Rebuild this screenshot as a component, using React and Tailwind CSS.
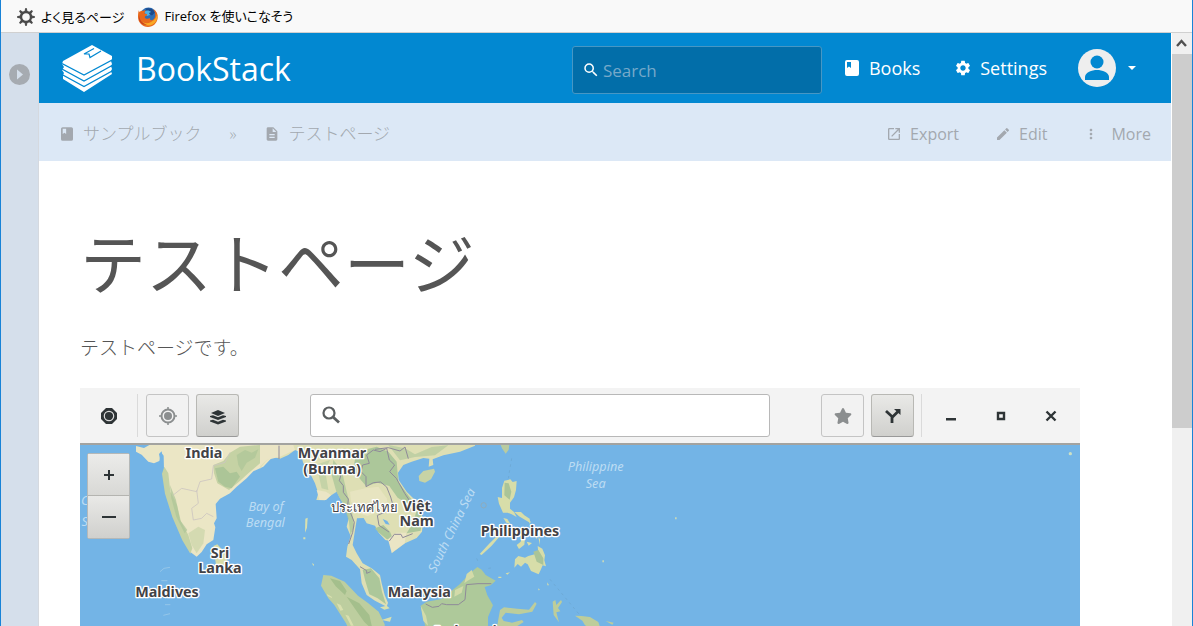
import { FaStar } from "react-icons/fa";
import {
  MdDescription,
  MdEdit,
  MdMoreVert,
  MdOpenInNew,
  MdSearch,
  MdSettings,
} from "react-icons/md";

function BookIcon({ className }) {
  return (
    <svg viewBox="0 0 14 16" className={className} fill="currentColor">
      <path
        fillRule="evenodd"
        d="M2 0h10a2 2 0 0 1 2 2v12a2 2 0 0 1-2 2H2a2 2 0 0 1-2-2V2a2 2 0 0 1 2-2zm0 2v6l2-1.500L6 8V2z"
      />
    </svg>
  );
}

function GearIcon() {
  return (
    <svg viewBox="0 0 18 18" className="size-[18px]" stroke="#4a4a4a" fill="none">
      <circle cx="9" cy="9" r="5" strokeWidth="2.400" />
      {[0, 45, 90, 135, 180, 225, 270, 315].map((angle) => (
        <path
          key={angle}
          d="M8 3.500L8.600 0.500H9.400L10 3.500z"
          fill="#4a4a4a"
          transform={`rotate(${angle} 9 9)`}
        />
      ))}
    </svg>
  );
}

function FirefoxIcon() {
  return (
    <svg viewBox="0 0 20 20" className="size-5">
      <circle cx="10.500" cy="9" r="8.500" fill="#2f6fb5" />
      <path d="M8 1.500c4-1 8 1 9 4l-3 3-4-2-3 1z" fill="#1b4a8c" />
      <path d="M6 5c2-2 5-2 7 0l-2 1 1 2-3 1z" fill="#4db2e6" />
      <path
        d="M1 3c0 1 .2 1.600.8 2C2.500 3.800 4 3.500 5 4c1-.8 2-.8 2.500-.6L6.300 6.500l3 .8c-.2 1.500-2 1.700-2.600 2.600.4 2 3 2.600 5.300 1.200-1 3.600 5 2.500 5.200-2C17.500 6 16.600 3.700 15 2c3.500 1.800 5 5 4.700 9-.5 5-4.700 9-9.700 9C4.500 20 0 15.500 0 10c0-3 .2-5 1-7z"
        fill="#e8691c"
      />
      <path
        d="M19 6c1.500 6-1.500 12-8 12.500-4 .2-7-2-8.500-5 3 3 7 3.500 10.500 1.500C17 13 19 10 19 6z"
        fill="#f9a825"
      />
      <path d="M1 8c.5 5 3 8.500 8 9.500C3.500 19 0 14 1 8z" fill="#c8401d" />
    </svg>
  );
}

function BookStackLogo() {
  return (
    <svg viewBox="0 0 50 47" className="h-[47px] w-[50px]">
      <path
        d="M1 16L30 0l20 11v3l-1 2 1 3-1 2 1 3-1 2 1 3L22 47 1 34l0-4 1-2-2-3 2-3-2-3z"
        fill="#fff"
      />
      <g fill="none" stroke="#0288d1" strokeWidth="1.200">
        <path d="M0 18.500L22 30 50 15" />
        <path d="M0 24L22 36 50 20.500" />
        <path d="M0 29.500L22 41.500 50 26" />
        <path d="M32 3.500L22 9h5l1 3.500L39 6" />
      </g>
    </svg>
  );
}

function BookmarkBar() {
  return (
    <nav className="flex h-[33px] shrink-0 items-center gap-3.5 border-b border-[#d0d0d0] bg-[#f9f9f9] pt-0.5 pl-4 font-['Noto_Sans_CJK_JP',sans-serif] text-[13px] text-black [font-feature-settings:'palt']">
      <a href="#frequent" className="flex items-center gap-1.5">
        <GearIcon />
        よく見るページ
      </a>
      <a href="#firefox" className="flex items-center gap-1.5">
        <FirefoxIcon />
        <span className="font-['Open_Sans','Noto_Sans_CJK_JP',sans-serif]">
          Firefox を使いこなそう
        </span>
      </a>
    </nav>
  );
}

function Header() {
  return (
    <header className="flex h-[70px] items-center bg-[#0288d1] pr-[35px] pl-[23px] text-white">
      <a href="#home" className="flex items-center gap-6">
        <BookStackLogo />
        <span className="pt-0.5 text-[32px]">BookStack</span>
      </a>
      <form className="relative mt-1 mr-[23px] ml-auto">
        <label htmlFor="search" className="sr-only">
          Search
        </label>
        <MdSearch className="absolute top-[15px] left-[10px] size-[18px]" />
        <input
          id="search"
          type="text"
          placeholder="Search"
          className="h-12 w-[250px] rounded-[3px] border border-[#4797c4] bg-[#026ea9] pl-[30px] text-[17px] placeholder:text-[#76a9c9] outline-none"
        />
      </form>
      <nav className="flex items-center text-lg">
        <a href="#books" className="mr-[34px] flex items-center gap-2.5">
          <BookIcon className="h-4 w-3.5" />
          Books
        </a>
        <a href="#settings" className="mr-[31px] flex items-center gap-2">
          <MdSettings className="size-[18px]" />
          Settings
        </a>
        <button type="button" aria-label="Account" className="flex items-center gap-3">
          <svg viewBox="0 0 38 38" className="size-[38px]">
            <circle cx="19" cy="19" r="19" fill="#eee" />
            <circle cx="19" cy="13" r="6.500" fill="#0288d1" />
            <path d="M7 31v-3c0-4.500 7-7 12-7s12 2.500 12 7v3z" fill="#0288d1" />
          </svg>
          <svg viewBox="0 0 8 4" className="h-1 w-2" fill="#fff">
            <path d="M0 0h8L4 4z" />
          </svg>
        </button>
      </nav>
    </header>
  );
}

function Breadcrumbs() {
  return (
    <div className="flex h-[58px] items-center justify-between bg-[#dce8f6] pt-[3px] pr-5 pl-[22px] text-[#a3a8af]">
      <nav className="flex items-center text-[17px] font-light">
        <a href="#book" className="flex items-center gap-2.5">
          <BookIcon className="h-3.5 w-3" />
          サンプルブック
        </a>
        <span className="mx-7 text-base">»</span>
        <a href="#page" className="flex items-center gap-2">
          <MdDescription className="size-4" />
          テストページ
        </a>
      </nav>
      <div className="flex items-center gap-9 text-base">
        <button type="button" className="flex items-center gap-2">
          <MdOpenInNew className="size-4" />
          Export
        </button>
        <a href="#edit" className="flex items-center gap-2">
          <MdEdit className="size-4" />
          Edit
        </a>
        <button type="button" className="flex items-center gap-3">
          <MdMoreVert className="size-4" />
          More
        </button>
      </div>
    </div>
  );
}

function ToolButton({ label, raised, children }) {
  return (
    <button
      type="button"
      aria-label={label}
      className={`flex h-[43px] w-[43px] shrink-0 items-center justify-center rounded-[3px] border ${
        raised
          ? "border-[#b8b8b4] border-b-[#999] bg-linear-to-b from-[#e9e9e7] to-[#d0d0cd] text-[#2e3436]"
          : "border-[#c4c4c4] bg-[#f2f2f2] text-[#8b8e8f]"
      }`}
    >
      {children}
    </button>
  );
}

function MapToolbar() {
  return (
    <div className="flex h-[57px] items-center border-b-2 border-[#a3a3a0] bg-[#f3f3f3] pr-[23px] pl-[21px] text-[#2e3436]">
      <svg viewBox="0 0 16 16" className="mr-5 size-4 shrink-0">
        <path d="M5 0h6l5 5v6l-5 5H5l-5-5V5z" fill="currentColor" />
        <circle cx="8" cy="8" r="4.700" fill="currentColor" stroke="#ddd" strokeWidth="1.200" />
      </svg>
      <div className="mr-2 h-[43px] w-px shrink-0 bg-[#dadada]" />
      <ToolButton label="Current location">
        <svg viewBox="0 0 18 18" className="size-[18px]" fill="none" stroke="currentColor">
          <circle cx="9" cy="9" r="6.500" strokeWidth="2" />
          <circle cx="9" cy="9" r="4" fill="currentColor" stroke="none" />
          <path d="M9 0v3M9 15v3M0 9h3M15 9h3" strokeWidth="1.500" />
        </svg>
      </ToolButton>
      <div className="mr-[71px] ml-[7px]">
        <ToolButton label="Layers" raised>
          <svg viewBox="0 0 16 16" className="mt-1 size-4" fill="currentColor">
            <path d="M8 0l7 3-7 3-7-3z" />
            <path d="M0 6l3-.8 5 2 5-2 3 .8v1L8 10 0 7z" />
            <path d="M0 10.500l3-.8 5 2 5-2 3 .8v1l-8 3-8-3z" />
          </svg>
        </ToolButton>
      </div>
      <div className="relative flex-1">
        <label htmlFor="map-search" className="sr-only">
          Search places
        </label>
        <svg
          viewBox="0 0 18 18"
          className="absolute top-3 left-3 size-[18px]"
          fill="none"
          stroke="#5b5f60"
        >
          <circle cx="7" cy="7" r="5.500" strokeWidth="2.200" />
          <path d="M11 11l6 5.500" strokeWidth="2.800" />
        </svg>
        <input
          id="map-search"
          type="text"
          className="block h-[43px] w-full rounded-[3px] border border-[#b8b8b8] bg-white pl-10 outline-none"
        />
      </div>
      <div className="ml-[51px] flex items-center gap-[7px]">
        <ToolButton label="Favorites">
          <FaStar className="size-[18px]" />
        </ToolButton>
        <ToolButton label="Route" raised>
          <svg viewBox="0 0 16 16" className="size-4" fill="none" stroke="currentColor">
            <path d="M1 3l6 5.500V15M7.500 9L13 3.500" strokeWidth="2.800" />
            <path d="M9 1h6.500v6z" fill="currentColor" stroke="none" />
          </svg>
        </ToolButton>
        <div className="h-[43px] w-px bg-[#dadada]" />
      </div>
      <div className="ml-[23px] flex items-center gap-[38px]">
        <button type="button" aria-label="Minimize">
          <svg viewBox="0 0 12 12" className="size-3" fill="currentColor">
            <path d="M1 8h10v2.500H1z" />
          </svg>
        </button>
        <button type="button" aria-label="Maximize">
          <svg viewBox="0 0 12 12" className="size-3" fill="none" stroke="currentColor">
            <path d="M3 3h6v6H3z" strokeWidth="2.400" />
          </svg>
        </button>
        <button type="button" aria-label="Close">
          <svg viewBox="0 0 12 12" className="size-3" fill="none" stroke="currentColor">
            <path d="M1.500 1.500l9 9M10.500 1.500l-9 9" strokeWidth="2.400" />
          </svg>
        </button>
      </div>
    </div>
  );
}

const COUNTRIES = [
  ["India", 372, 38],
  ["Sri", 420, 336],
  ["Lanka", 420, 382],
  ["Maldives", 261, 455],
  ["Myanmar", 756, 38],
  ["(Burma)", 756, 84],
  ["Việt", 1010, 197],
  ["Nam", 1010, 242],
  ["Malaysia", 1018, 455],
  ["Philippines", 1320, 271],
  ["Indonesia", 1170, 570],
];

const SEAS = [
  ["Bay of", 558, 197],
  ["Bengal", 556, 247],
  ["Philippine", 1547, 78],
  ["Sea", 1547, 129],
  ["C", 14, 181],
  ["S", 14, 243],
];

function WorldMap() {
  return (
    <svg viewBox="0 0 3000 600" className="block h-auto w-full bg-[#73b4e6]">
      <g transform="translate(-30 -15)">
        <path
          fill="#ebe6c5"
          d="M198 15V35L215 44 235 65 252 70 268 63 273 37 281 47 282 90 290 140 305 195 330 260 345 300 360 335 380 350 395 336 410 313 430 300 436 262 432 250 440 235 437 192 450 176 480 160 500 140 530 115 550 94 580 80 602 57V15z"
        />
        <path fill="#73b4e6" d="M196 15h42l-16 9-24-6zM267 42l8-8 2 14-6 16z" />
        <g fill="#c5d2a4">
          <path d="M283 80l12 20 6 55 20 40 12 50 22 40 12 40-6 16-24-40-30-70-22-70-9-60z" />
          <path d="M430 75l30-12 20-25 30-18 60-5 25 20-25 35-35 30-28 25-30 25-35-20-10-30z" />
          <path d="M355 280l30-20 20 10-5 40-20 30-15-25z" opacity=".6" />
        </g>
        <g fill="#acc597">
          <path d="M435 85l25-5 20 20 20-5 10 15-25 35-20-5-20-15z" />
          <path d="M300 135l18 45 12 60 22 30-8 10-25-50-15-55z" opacity=".7" />
          <path d="M500 45l25-15 20 8 20-10-10 25-25 15-15 25-10-18z" opacity=".7" />
        </g>
        <g fill="none" stroke="#ccc5c0" strokeWidth="2.500">
          <path d="M310 165l25-20 45 10 10-30 35-8 5-40 35-10 15-30" />
          <path d="M380 150l5 40-20 15 5 35 25-5 15-15 20 10" />
        </g>
        <path
          fill="#d7dba7"
          d="M430 318l12-5 18 20 12 30-4 22-18 7-12-18z"
        />
        <path fill="none" stroke="#94c6e9" strokeWidth="3" d="M270 395l12-10 18-3M274 422h18M285 494h16M280 526l20-5" />
      </g>

      <g transform="translate(540 -15)">
        <path
          fill="#dedfb4"
          d="M0 15V86L18 62 40 50 60 56 85 45 105 30 120 36 130 70 150 100 165 130 175 160 169 180 195 181 215 165 230 155 240 175 255 200 266 235 260 260 272 288 262 320 258 350 275 360 300 388 305 430 320 465 345 482 380 500 384 488 374 465 365 430 360 405 335 385 308 370 290 340 278 315 285 270 291 235 311 234 320 250 345 257 356 278 376 300 400 305 395 340 417 323 435 310 470 294 486 275 490 240 480 208 465 180 440 155 416 120 414 98 430 75 455 65 490 54 508 56 506 80 520 75 518 58 550 46 600 35 645 17V15z"
        />
        <g fill="#acc79a">
          <path d="M290 35l60-15 35 15 25 30 5 60 25 35 20 25-15 8-32-20-25-35-35-10-35 10-30-35-5-35z" />
          <path d="M220 60l25 30 15 65 15 55 8 50-12 25-4-40-16-50-22-40-14-50z" opacity=".8" />
          <path d="M345 265l25-10 20 20 10 25-20-3-25-20z" />
          <path d="M440 280l20-35 15-50 12 45-5 32z" />
          <path d="M308 390l25-5 25 30 8 40 12 38-25-18-25-12-12-40z" />
          <path d="M385 15l50 10 30 18 50-22 50-5-40 30-60 5-45 10z" opacity=".6" />
          <path d="M150 80l25 20 10 45 20 5-10-60 15-30z" opacity=".5" />
        </g>
        <g fill="#ebe5c5">
          <path d="M170 150l8 30 20 0 15-15-15-10zM0 15v65l20-20 40-10 45-20-5-15z" />
          <path d="M270 155l45-10 40-5 25 35 5 25-55 15-45-15-12-15z" opacity=".7" />
          <path d="M384 298l25-20 30 0-5 32-39 28z" />
          <path d="M295 182l8 40 20 6 22-10z" opacity=".8" />
        </g>
        <path fill="#73b4e6" d="M368 237l14 6 7 11-12-2z" />
        <path fill="#c7d3a5" d="M476 108l14-15 32-7 3 9-12 23-18 10-17-5z" />
        <path
          fill="#bdce9f"
          d="M190 405l24 2 40 18 40 42 30 22 32 26 18 38 2 62h-90l-28-65-35-55-18-20-22-38z"
        />
        <path fill="#9cb985" d="M210 415l30 8 20 30-5 12-28-26zM260 470l38 20 30 35 10 45-25-24-25-35z" opacity=".75" />
        <g fill="#d9e0af">
          <path d="M136 236l7-3-2 30-6 15zM130 292h6v6h-6zM156 369l6 4-2 6zM201 462l14 8 2 5-14-7zM230 490l12 5 8 15-9 2zM256 524l10 3 15 30h-8zM360 502l20-5 9 8-16 4zM365 540l30-10-5 15z" />
        </g>
        <path
          fill="#aec99a"
          d="M482 497l18-12 45-8 30-25 25-20 35-37 17-14 13 8 12 16 30 17-15 14-18 5 8 25 17 30-15 35 0 86h-175l-20-88z"
        />
        <path fill="#d3dba9" d="M620 402l15-12 8 20-20 12-10 8zM482 497l16 30 6 30-14-14zM585 450l25-12-5 20-22 12z" />
        <g fill="none" stroke="#8f8a99" strokeWidth="3">
          <path d="M57 17v40M243 104l-5 18 12 15 0 20 15 20-2 20 10 25 10 25-5 30-12 35" />
          <path d="M318 140l0-30-15-15 5-20 20-5-8-25 20-15 20 5 20-10 8 35 16 15-15 20 20 20 25 45 20 30-5 25" />
          <path d="M318 140l22-12 22-2 18 15 12 30 10 35-50 20 5 30 30 20M345 28l40-5 35 10 15-12 10 35M388 303l15-20h20l5 10 30-12" />
          <path d="M300 380l20 12 0 8 12-5M497 492l20 10 20-3 8-8 15 3 35 0 20-15 4-45 35-3h40" />
        </g>
      </g>

      <g transform="translate(1020 -15)">
        <path fill="#b9cba0" d="M242 15h26l-2 14-9 12-11-16z" />
        <g fill="#d7dda9">
          <path d="M253 122l18-4 7 8 12-3-2 27-6 22-12 16 0 18 12 10 8 15-15-8-12-5-14 0-12-27-4-20 13 3 0-30z" />
          <path d="M283 216l20 0 10 10 16 10 2 13-14-8-20-12zM250 234l12 3 9 15-12-4zM229 290l8 2-22 25-30 28-6-3 30-32z" />
          <path d="M290 315l12-10 6-23 8 0-3 32-16 13zM327 240l5 5-3 7zM335 255l20 18-5 25-9-20zM320 305l16 4-10 8zM355 292l5 5v18z" />
          <path d="M283 383l2-25 10-10 20 5 10-5 30-8-2-22 14 8 8 20-2 15 5 18-10-3-5 12-7 15-23-10-10-20-8-5-12 12-10-8z" />
          <path d="M235 410h9v4h-9zM257 400l13-3-8 7zM382 427l5 9-5 0zM355 445l5 5-5 1z" />
        </g>
        <path fill="#aac498" d="M254 128l12 2 8 25-5 24-16-13zM340 335l15-5 15 25 0 20-20-10z" />
        <g fill="#bdcd9b">
          <path d="M240 510l12-8 40 4 35 3 18-23 5 5-13 24-40 8-40-5-12 15 6 10 25 5 30-8 5 6-22 14-22 20-30 0-5-25z" />
          <path d="M398 485l8-5 3 15 14-15 3 6-12 18 7 10-12 3 8 30-16-22z" />
          <path d="M465 527l20 1 25 3 25 15 10 30-20-5-30-15-8-14zM557 543l24 5-4 6zM340 565l35-4-10 8z" />
        </g>
        <g fill="none" stroke="#6ba4cf" strokeWidth="2">
          <circle cx="191" cy="196" r="8" stroke="#8fabbb" strokeWidth="3" />
          <path d="M275 55l-10 60M170 355l6 15M390 418l90 108M205 385l15-2" strokeDasharray="8 10" />
        </g>
        <path fill="#c6d8bb" d="M765 232h5v6h-5zM547 361h5v6h-5z" />
        <circle cx="1951" cy="41" r="5" fill="#cce0c5" />
      </g>

      <g
        textAnchor="middle"
        dominantBaseline="central"
        className="font-['Noto_Sans','Open_Sans',sans-serif]"
      >
        <g fill="#bcdcf3" fontSize="38" fontStyle="italic">
          {SEAS.map(([name, x, y]) => (
            <text key={name} x={x} y={y - 15}>
              {name}
            </text>
          ))}
          <text transform="translate(1113 255) rotate(-64)">South China Sea</text>
        </g>
        <g
          fill="#424246"
          stroke="#fff"
          strokeWidth="8"
          strokeLinejoin="round"
          paintOrder="stroke"
          fontSize="43"
          fontWeight="700"
        >
          {COUNTRIES.map(([name, x, y]) => (
            <text key={name} x={x} y={y - 15}>
              {name}
            </text>
          ))}
          <text x="852" y="185" fontWeight="400" fontSize="39">
            ประเทศไทย
          </text>
        </g>
      </g>
    </svg>
  );
}

function ZoomControls() {
  return (
    <div className="absolute top-[65px] left-[7px] flex w-[43px] flex-col rounded-[2px] border border-[#b4b8b8] text-[#2e3436]">
      <button
        type="button"
        aria-label="Zoom in"
        className="flex h-[42px] items-center justify-center border-b border-[#b4b4b0] bg-linear-to-b from-[#ececea] to-[#d8d8d5]"
      >
        <svg viewBox="0 0 10 10" className="size-2.5" stroke="currentColor" strokeWidth="2">
          <path d="M5 0v10M0 5h10" />
        </svg>
      </button>
      <button
        type="button"
        aria-label="Zoom out"
        className="flex h-[42px] items-center justify-center bg-linear-to-b from-[#e9e9e7] to-[#d0d0cd]"
      >
        <svg viewBox="0 0 14 2" className="h-0.5 w-3.5" fill="currentColor">
          <path d="M0 0h14v2H0z" />
        </svg>
      </button>
    </div>
  );
}

function Scrollbar() {
  return (
    <div className="ml-px flex w-5 shrink-0 flex-col bg-[#f0f0f0]">
      <svg viewBox="0 0 20 21" className="h-[21px] w-5" fill="none" stroke="#505050">
        <path d="M5 13l4.500-5 4.500 5" strokeWidth="2.400" />
      </svg>
      <div className="h-[374px] bg-[#cdcdcd]" />
    </div>
  );
}

export default function App() {
  return (
    <div className="flex h-screen flex-col overflow-hidden border-x border-[#1883d7] bg-white font-['Open_Sans','Noto_Sans_CJK_JP',sans-serif]">
      <BookmarkBar />
      <div className="flex min-h-0 flex-1">
        <aside className="w-[38px] shrink-0 border-r border-[#d5d9df] bg-[#d5dfeb] pt-[31px] pl-2">
          <button type="button" aria-label="Open sidebar" className="block">
            <svg viewBox="0 0 21 21" className="size-[21px]">
              <circle cx="10.500" cy="10.500" r="10.500" fill="#a6abb1" />
              <path d="M8 5.500l6 5-6 5z" fill="#d5dfeb" />
            </svg>
          </button>
        </aside>
        <div className="min-w-0 flex-1 overflow-hidden">
          <Header />
          <Breadcrumbs />
          <main className="px-[41px] pt-[53px] text-[#555]">
            <h1 className="text-[66px] leading-[98px]">テストページ</h1>
            <p className="mt-5 mb-6 text-[19px] leading-8 font-light">テストページです。</p>
            <div className="relative max-w-[1000px]">
              <MapToolbar />
              <WorldMap />
              <ZoomControls />
            </div>
          </main>
        </div>
        <Scrollbar />
      </div>
    </div>
  );
}
